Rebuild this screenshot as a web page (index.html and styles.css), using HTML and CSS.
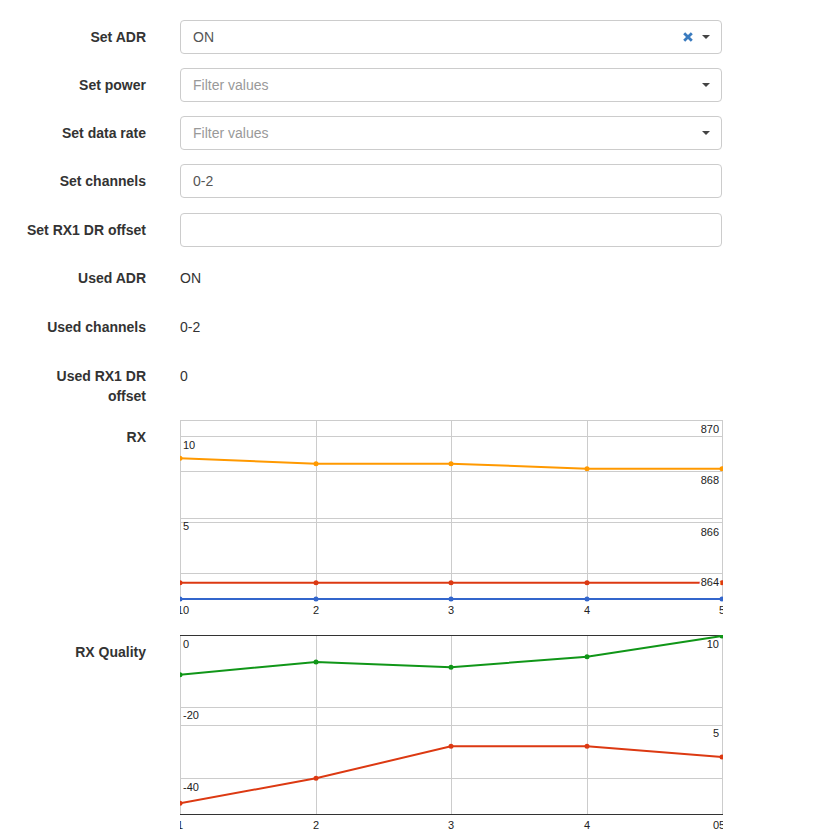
FILE: index.html
```html
<!DOCTYPE html>
<html>
<head>
<meta charset="utf-8">
<title>Device settings</title>
<link rel="stylesheet" href="styles.css">
</head>
<body>
<form class="form">
  <div class="row">
    <label class="lbl">Set ADR</label>
    <div class="ctl">
      <div class="select">
        <span class="sel-value">ON</span>
        <span class="sel-clear"><svg width="10" height="10" viewBox="0 0 10 10"><path d="M1.2 1.2 L8.8 8.8 M8.8 1.2 L1.2 8.8" stroke="#3a7bbf" stroke-width="2.8" fill="none"/></svg></span>
        <span class="caret"></span>
      </div>
    </div>
  </div>
  <div class="row">
    <label class="lbl">Set power</label>
    <div class="ctl">
      <div class="select">
        <span class="sel-value placeholder">Filter values</span>
        <span class="caret"></span>
      </div>
    </div>
  </div>
  <div class="row">
    <label class="lbl">Set data rate</label>
    <div class="ctl">
      <div class="select">
        <span class="sel-value placeholder">Filter values</span>
        <span class="caret"></span>
      </div>
    </div>
  </div>
  <div class="row row-loose">
    <label class="lbl">Set channels</label>
    <div class="ctl">
      <div class="input">0-2</div>
    </div>
  </div>
  <div class="row">
    <label class="lbl">Set RX1 DR offset</label>
    <div class="ctl">
      <div class="input"></div>
    </div>
  </div>
  <div class="row row-loose">
    <label class="lbl">Used ADR</label>
    <div class="ctl static">ON</div>
  </div>
  <div class="row row-loose">
    <label class="lbl">Used channels</label>
    <div class="ctl static">0-2</div>
  </div>
  <div class="row">
    <label class="lbl">Used RX1 DR offset</label>
    <div class="ctl static">0</div>
  </div>
  <div class="row row-loose">
    <label class="lbl">RX</label>
    <div class="ctl">
      <svg class="chart" width="543" height="200" viewBox="0 0 543 200">
        <g stroke="#cccccc" stroke-width="1" fill="none">
          <path d="M0.5 0 V180 M136.5 0 V180 M271.5 0 V180 M407.5 0 V180 M542.5 0 V180"/>
          <path d="M0 0.5 H543 M0 16.5 H543 M0 51.5 H543 M0 98.5 H543 M0 102.5 H543 M0 153.5 H543"/>
        </g>
        <g class="ctext">
          <text x="3" y="29">10</text>
          <text x="3" y="110">5</text>
          <text x="539" y="13" text-anchor="end">870</text>
          <text x="539" y="64" text-anchor="end">868</text>
          <text x="539" y="116" text-anchor="end">866</text>
        </g>
        <polyline points="0,38.3 136,43.7 271,43.7 407,48.7 542,48.7" stroke="#ff9900" stroke-width="2" fill="none"/>
        <g fill="#ff9900">
          <circle cx="0" cy="38.3" r="2.5"/><circle cx="136" cy="43.7" r="2.5"/><circle cx="271" cy="43.7" r="2.5"/><circle cx="407" cy="48.7" r="2.5"/><circle cx="542" cy="48.7" r="2.5"/>
        </g>
        <polyline points="0,162.7 542,162.7" stroke="#dc3912" stroke-width="2" fill="none"/>
        <g fill="#dc3912">
          <circle cx="0" cy="162.7" r="2.5"/><circle cx="136" cy="162.7" r="2.5"/><circle cx="271" cy="162.7" r="2.5"/><circle cx="407" cy="162.7" r="2.5"/><circle cx="542" cy="162.7" r="2.5"/>
        </g>
        <polyline points="0,179 543,179" stroke="#3366cc" stroke-width="2" fill="none"/>
        <g fill="#3366cc">
          <circle cx="0" cy="179" r="2.5"/><circle cx="136" cy="179" r="2.5"/><circle cx="271" cy="179" r="2.5"/><circle cx="407" cy="179" r="2.5"/><circle cx="542" cy="179" r="2.5"/>
        </g>
        <g class="ctext">
          <text class="halo" x="539" y="166" text-anchor="end">864</text>
          <text x="0" y="194" text-anchor="middle">1</text>
          <text x="3" y="194">0</text>
          <text x="136" y="194" text-anchor="middle">2</text>
          <text x="271" y="194" text-anchor="middle">3</text>
          <text x="407" y="194" text-anchor="middle">4</text>
          <text x="542" y="194" text-anchor="middle">5</text>
        </g>
      </svg>
    </div>
  </div>
  <div class="row">
    <label class="lbl">RX Quality</label>
    <div class="ctl">
      <svg class="chart" width="543" height="200" viewBox="0 0 543 200">
        <g stroke="#cccccc" stroke-width="1" fill="none">
          <path d="M0.5 0 V180 M136.5 0 V180 M271.5 0 V180 M407.5 0 V180 M542.5 0 V180"/>
          <path d="M0 72.5 H543 M0 90.5 H543 M0 143.5 H543"/>
        </g>
        <g stroke="#333333" stroke-width="1" fill="none">
          <path d="M0 0.5 H543 M0 179.5 H543"/>
        </g>
        <g class="ctext">
          <text x="3" y="13">0</text>
          <text x="3" y="84">-20</text>
          <text x="3" y="156">-40</text>
          <text x="539" y="13" text-anchor="end">10</text>
          <text x="539" y="102" text-anchor="end">5</text>
        </g>
        <polyline points="0,39.7 136,27 271,32.3 407,21.7 542,1" stroke="#109618" stroke-width="2" fill="none"/>
        <g fill="#109618">
          <circle cx="0" cy="39.7" r="2.5"/><circle cx="136" cy="27" r="2.5"/><circle cx="271" cy="32.3" r="2.5"/><circle cx="407" cy="21.7" r="2.5"/><circle cx="542" cy="1" r="2.5"/>
        </g>
        <polyline points="0,168.3 136,143.3 271,111.3 407,111.3 542,122" stroke="#dc3912" stroke-width="2" fill="none"/>
        <g fill="#dc3912">
          <circle cx="0" cy="168.3" r="2.5"/><circle cx="136" cy="143.3" r="2.5"/><circle cx="271" cy="111.3" r="2.5"/><circle cx="407" cy="111.3" r="2.5"/><circle cx="542" cy="122" r="2.5"/>
        </g>
        <g class="ctext">
          <text x="0" y="194" text-anchor="middle">1</text>
          <text x="136" y="194" text-anchor="middle">2</text>
          <text x="271" y="194" text-anchor="middle">3</text>
          <text x="407" y="194" text-anchor="middle">4</text>
          <text x="539" y="194" text-anchor="end">0</text>
          <text x="542" y="194" text-anchor="middle">5</text>
        </g>
      </svg>
    </div>
  </div>
</form>
</body>
</html>
```

FILE: styles.css
```css
* {
  box-sizing: border-box;
}

html,
body {
  margin: 0;
  padding: 0;
  background: #ffffff;
}

body {
  font-family: "Liberation Sans", Arial, Helvetica, sans-serif;
  font-size: 14px;
  line-height: 20px;
  color: #333333;
}

.form {
  padding-top: 20px;
}

.row {
  display: grid;
  grid-template-columns: 146px 542px;
  column-gap: 34px;
  align-items: start;
  margin-bottom: 14px;
}

.row-loose {
  margin-bottom: 15px;
}

.lbl {
  display: block;
  padding: 7px 0 0 24px;
  text-align: right;
  font-weight: bold;
  color: #333333;
}

.select,
.input {
  display: flex;
  align-items: center;
  height: 34px;
  border: 1px solid #cccccc;
  border-radius: 4px;
  padding: 6px 11px 6px 12px;
  color: #555555;
  background: #ffffff;
}

.sel-value {
  flex: 1;
}

.placeholder {
  color: #999999;
}

.sel-clear {
  display: flex;
  width: 10px;
  height: 10px;
  margin-right: 9px;
}

.caret {
  width: 0;
  height: 0;
  border-top: 4px solid #444444;
  border-left: 4px solid transparent;
  border-right: 4px solid transparent;
  margin-top: -1px;
}

.static {
  padding-top: 7px;
  padding-bottom: 7px;
  min-height: 34px;
  color: #333333;
}

.chart {
  display: block;
}

.ctext {
  font-family: "Liberation Sans", Arial, sans-serif;
  font-size: 11px;
  fill: #222222;
}

.halo {
  stroke: #ffffff;
  stroke-width: 3px;
  paint-order: stroke;
}
```
